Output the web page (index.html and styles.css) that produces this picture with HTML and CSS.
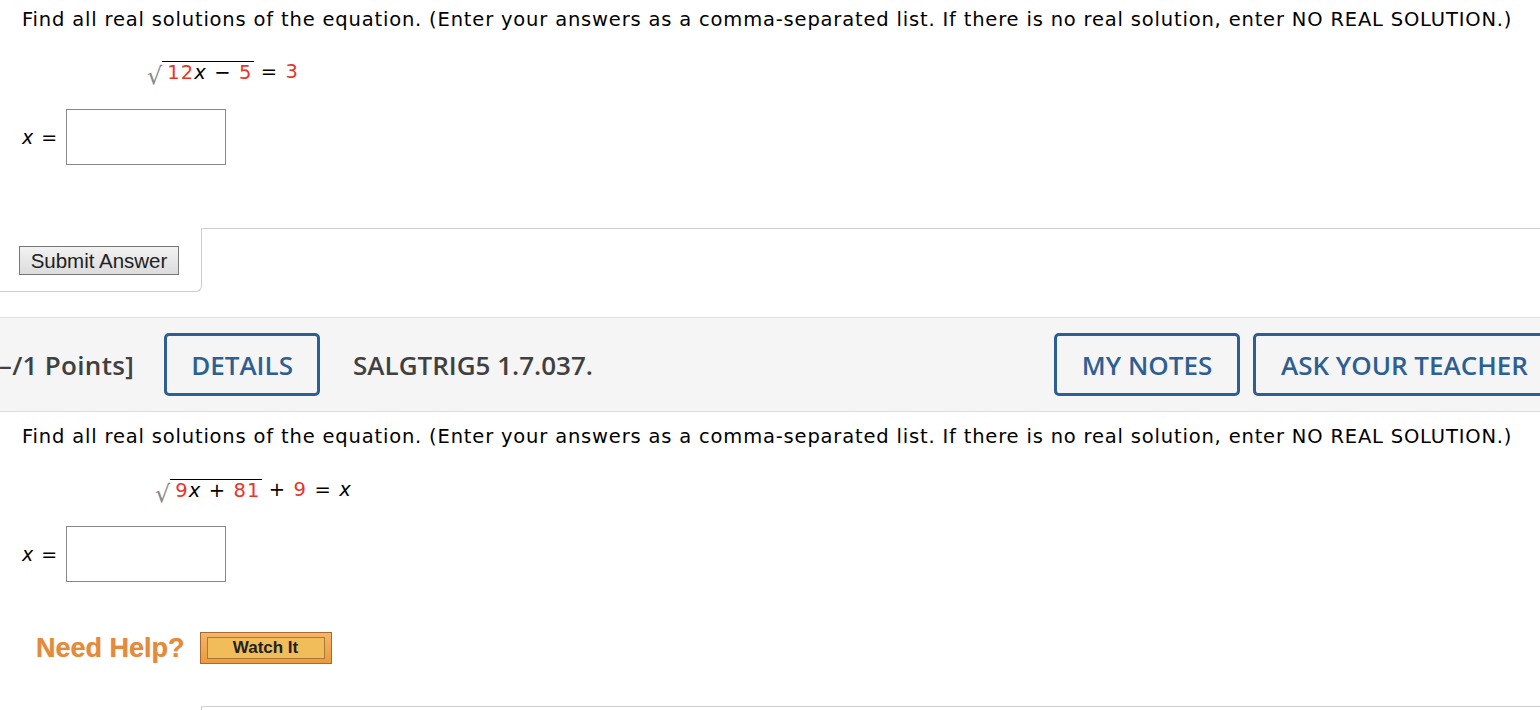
FILE: index.html
```html
<!DOCTYPE html>
<html>
<head>
<meta charset="utf-8">
<link rel="stylesheet" href="styles.css">
</head>
<body>
<div class="page">
  <section class="question first">
    <p class="prompt">Find all real solutions of the equation. (Enter your answers as a comma-separated list. If there is no real solution, enter NO REAL SOLUTION.)</p>
    <div class="equation eq1">
      <span class="radical">√</span><span class="radicand"><span class="red">12</span><i>x</i> − <span class="red">5</span></span>&nbsp;= <span class="red">3</span>
    </div>
    <div class="answer-row">
      <span class="var"><i>x</i> =</span>
      <span class="input"></span>
    </div>
    <div class="submit-area">
      <div class="submit-cell">
        <button class="submit">Submit Answer</button>
      </div>
      <div class="submit-rest"></div>
    </div>
  </section>

  <header class="qhead">
    <span class="points">[–/1 Points]</span>
    <span class="btn details">DETAILS</span>
    <span class="code">SALGTRIG5 1.7.037.</span>
    <span class="spacer"></span>
    <span class="btn notes">MY NOTES</span>
    <span class="btn ask">ASK YOUR TEACHER</span>
  </header>

  <section class="question second">
    <p class="prompt">Find all real solutions of the equation. (Enter your answers as a comma-separated list. If there is no real solution, enter NO REAL SOLUTION.)</p>
    <div class="equation eq2">
      <span class="radical">√</span><span class="radicand"><span class="red">9</span><i>x</i> + <span class="red">81</span></span>&nbsp;+ <span class="red">9</span> = <i>x</i>
    </div>
    <div class="answer-row">
      <span class="var"><i>x</i> =</span>
      <span class="input"></span>
    </div>
    <div class="help-row">
      <span class="need-help">Need Help?</span>
      <span class="watch"><span class="watch-inner">Watch It</span></span>
    </div>
    <div class="submit-area bottom">
      <div class="submit-cell empty"></div>
      <div class="submit-rest"></div>
    </div>
  </section>
</div>
</body>
</html>
```

FILE: styles.css
```css
html, body {
  margin: 0;
  padding: 0;
  background: #fff;
  overflow: hidden;
}
.page {
  width: 1540px;
  height: 710px;
  overflow: hidden;
  font-family: "DejaVu Sans", Verdana, sans-serif;
  color: #000;
}
.question {
  padding: 0 0 0 22px;
}
.prompt {
  margin: 0;
  font-size: 19.5px;
  line-height: 24px;
  letter-spacing: 0.82px;
  white-space: nowrap;
}
.first .prompt {
  padding-top: 8px;
}
.second .prompt {
  padding-top: 13px;
}
.equation {
  font-size: 19.5px;
  line-height: 24px;
  letter-spacing: 1.1px;
  display: flex;
  align-items: flex-end;
  white-space: pre;
}
.eq1 {
  margin: 28px 0 0 125px;
}
.eq2 {
  margin: 29px 0 0 133px;
}
.radical {
  color: #888;
  font-size: 24px;
  line-height: 24px;
  letter-spacing: 0;
  transform: translateY(4px);
  margin-right: 0;
}
.radicand {
  border-top: 1px solid #000;
  padding: 0 1px 0 5px;
  line-height: 22px;
}
.red {
  color: #e8352a;
}
.answer-row {
  display: flex;
  align-items: center;
  gap: 9px;
}
.first .answer-row {
  margin-top: 25px;
}
.second .answer-row {
  margin-top: 24px;
}
.var {
  font-size: 19px;
  letter-spacing: 1px;
  width: 35px;
  white-space: nowrap;
}
.input {
  display: block;
  width: 158px;
  height: 54px;
  border: 1px solid #888;
}
.submit-area {
  display: flex;
  margin-left: -22px;
  margin-top: 63px;
}
.submit-cell {
  width: 202px;
  height: 64px;
  border-bottom: 1px solid #ccc;
  border-right: 1px solid #ccc;
  border-bottom-right-radius: 6px;
  display: flex;
  align-items: flex-end;
  padding-bottom: 16px;
  box-sizing: border-box;
}
.submit-rest {
  flex: 1;
  border-top: 1px solid #ccc;
  border-top-left-radius: 2px;
}
.submit {
  margin-left: 19px;
  width: 160px;
  height: 29px;
  font-family: "Liberation Sans", Arial, sans-serif;
  font-size: 20.5px;
  color: #222;
  background: linear-gradient(#f2f2f2, #dcdcdc);
  border: 1px solid #777;
  padding: 0;
  white-space: nowrap;
}
.qhead {
  margin-top: 25px;
  height: 93px;
  background: #f5f5f5;
  border-top: 1px solid #ddd;
  border-bottom: 1px solid #ddd;
  display: flex;
  align-items: center;
  font-family: "Open Sans", sans-serif;
  font-size: 26px;
  font-weight: 600;
  white-space: nowrap;
}
.points {
  color: #404040;
  margin-left: -10px;
  letter-spacing: 0.3px;
  margin-right: 30px;
}
.btn {
  box-sizing: border-box;
  height: 63px;
  border: 3px solid #2d5f93;
  border-radius: 5px;
  color: #2d5f93;
  display: flex;
  align-items: center;
  justify-content: center;
  background: #f5f5f5;
}
.details {
  width: 156px;
}
.code {
  color: #404040;
  margin-left: 33px;
}
.spacer {
  flex: 1;
}
.notes {
  width: 186px;
}
.ask {
  width: 300px;
  margin-left: 13px;
  margin-right: -13px;
  justify-content: flex-start;
  padding-left: 25px;
}
.help-row {
  display: flex;
  align-items: center;
  margin-top: 50px;
  margin-left: 14px;
}
.need-help {
  font-family: "Liberation Sans", Arial, sans-serif;
  font-weight: bold;
  font-size: 27px;
  color: #e38a3c;
  text-shadow: 0 0 1px rgba(227, 138, 60, 0.6);
  margin-right: 15px;
  white-space: nowrap;
}
.watch {
  display: block;
  width: 132px;
  height: 32px;
  box-sizing: border-box;
  border: 1px solid #a86a2e;
  background: linear-gradient(#f6b56a, #ec9a3e);
  padding: 4px 6px;
}
.watch-inner {
  display: flex;
  align-items: center;
  justify-content: center;
  height: 100%;
  box-sizing: border-box;
  border: 1px solid #a87a3a;
  background: #f1bc5a;
  font-family: "Liberation Sans", Arial, sans-serif;
  font-weight: bold;
  font-size: 17px;
  color: #222;
  white-space: nowrap;
}
.bottom {
  margin-top: 42px;
}
.submit-cell.empty {
  height: 21px;
  border: none;
  border-right: 1px solid #ccc;
  border-radius: 0;
  padding: 0;
  width: 202px;
}
```
